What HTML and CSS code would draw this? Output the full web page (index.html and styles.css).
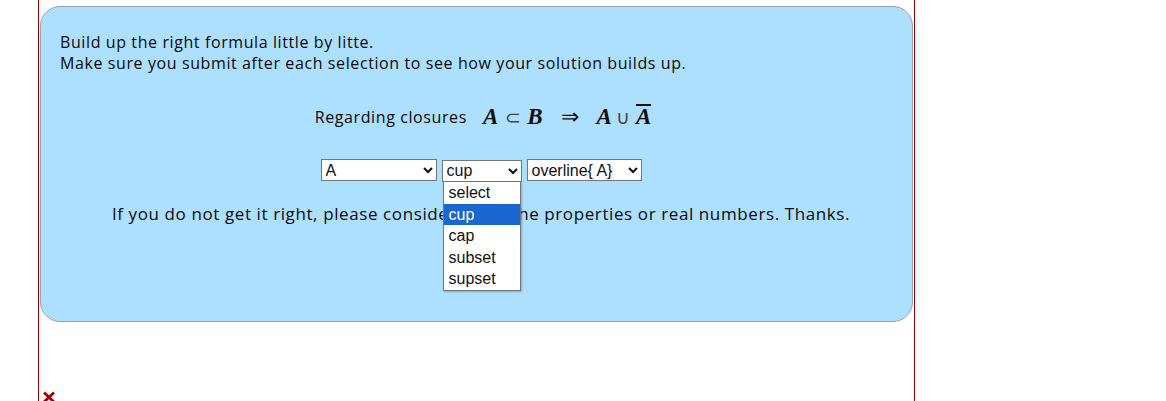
FILE: index.html
```html
<!DOCTYPE html>
<html lang="en">
<head>
    <meta charset="UTF-8">
    <title>Closures</title>
    <link rel="stylesheet" href="styles.css">
</head>
<body>
    <div class="page">
        <div class="question">
            <p class="intro">Build up the right formula little by litte.<br>
            Make sure you submit after each selection to see how your solution builds up.</p>

            <div class="formula">
                <span class="label">Regarding closures</span>
                <span class="math"><i class="v">A</i><span class="op sub">&sub;</span><i class="v wide">B</i><span class="arrow">&rArr;</span><i class="v narrow">A</i><span class="op">&cup;</span><i class="v bar">A</i></span>
            </div>

            <div class="answer">
                <select class="sel-a">
                    <option>A</option>
                </select>
                <span class="open-select">
                    <select class="sel-op">
                        <option>cup</option>
                    </select>
                    <!-- the open drop-down list -->
                    <div class="options">
                        <div>select</div>
                        <div class="active">cup</div>
                        <div>cap</div>
                        <div>subset</div>
                        <div>supset</div>
                    </div>
                </span>
                <select class="sel-b">
                    <option>overline{ A}</option>
                </select>
            </div>

            <p class="hint">If you do not get it right, please consider using the properties or real numbers. Thanks.</p>
        </div>

        <div class="mark">
            <svg width="14" height="12" viewBox="0 0 14 12"><path d="M2 1.5 L12 11 M12 1.5 L2 11" stroke="#a00000" stroke-width="2.8" fill="none"/></svg>
        </div>
    </div>
</body>
</html>
```

FILE: styles.css
```css
body {
    margin: 0;
    font-family: "Open Sans", sans-serif;
    font-size: 16px;
    letter-spacing: 0.6px;
    color: #0a0a0a;
    background: white;
}
.page {
    margin-left: 38px;
    width: 877px;
    height: 401px;
    border-left: 1px solid #a00000;
    border-right: 1px solid #a00000;
    padding-top: 6px;
    box-sizing: border-box;
    overflow: hidden;
}
.question {
    margin: 0 1px;
    height: 316px;
    box-sizing: border-box;
    padding: 25px 10px 0 19px;
    background: #addfff;
    border: 1px solid #9aa3ab;
    border-radius: 20px;
}
.intro {
    margin: 0;
    line-height: 21px;
}
.formula {
    margin-top: 29px;
    display: flex;
    justify-content: center;
    align-items: center;
    height: 28px;
    padding-left: 4px;
}
.label {
    margin-right: 16px;
}
.math {
    display: flex;
    align-items: baseline;
    font-family: "Liberation Serif", serif;
    letter-spacing: 0;
}
.math .v {
    font-weight: bold;
    font-size: 23px;
    line-height: 28px;
}
.math .wide {
    margin-right: 18px;
}
.math .narrow {
    margin-right: 4px;
}
.math .op {
    font-size: 19px;
    color: #444;
    margin: 0 6px 0 0;
}
.math .sub {
    margin-left: 7px;
}
.math .arrow {
    font-size: 22px;
    margin-right: 18px;
}
.math .bar {
    border-top: 2px solid #111;
    line-height: 22px;
}
.answer {
    margin-top: 28px;
    display: flex;
    justify-content: center;
    gap: 5px;
}
.answer select {
    font-family: "Liberation Sans", Arial, sans-serif;
    font-size: 16px;
    letter-spacing: 0;
    height: 22px;
    background: white;
    color: #111;
    border: 1px solid #767676;
    border-radius: 0;
}
.sel-a {
    width: 116px;
}
.sel-op {
    width: 80px;
}
.sel-b {
    width: 115px;
}
.open-select {
    position: relative;
}
.options {
    position: absolute;
    top: 22px;
    left: 1px;
    width: 76px;
    background: white;
    border: 1px solid #767676;
    box-shadow: 1px 1px 2px rgba(0,0,0,0.25);
    font-family: "Liberation Sans", Arial, sans-serif;
    font-size: 16px;
    letter-spacing: 0;
    line-height: 21.6px;
    z-index: 2;
}
.options div {
    padding-left: 5px;
    color: #111;
}
.options .active {
    background: #1a67d2;
    color: white;
}
.hint {
    margin: 20px 0 0;
    font-size: 17px;
    text-align: center;
}
.mark {
    margin-top: 64px;
    padding-left: 3px;
}
```
